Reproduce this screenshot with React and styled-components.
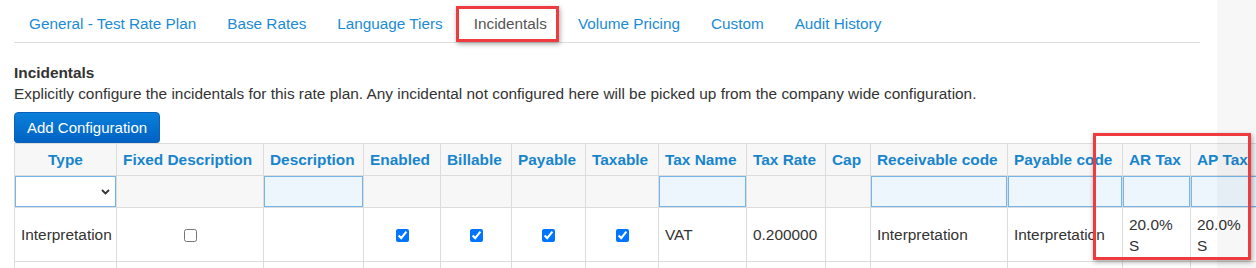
import React from "react";
import styled, { createGlobalStyle, css } from "styled-components";

const GlobalStyle = createGlobalStyle`
  html, body { margin: 0; padding: 0; overflow: hidden; background: #fff; }
  body {
    font-family: "Liberation Sans", Arial, Helvetica, sans-serif;
    font-size: 15.4px;
    line-height: 21px;
    color: #333;
  }
  * { box-sizing: border-box; }
`;

const Page = styled.div`
  position: relative;
  width: 1256px;
  height: 268px;
  overflow: hidden;
`;

const Content = styled.div`
  width: 1200px;
  padding-left: 14px;
`;

const TabBar = styled.nav`
  display: flex;
  gap: 1px;
  height: 43px;
  border-bottom: 1px solid #dedede;
`;

const Tab = styled.a`
  position: relative;
  display: block;
  padding: 13px 15px 0;
  height: 42px;
  font-size: 15.3px;
  line-height: 21px;
  color: #1b8bd6;
  text-decoration: none;
  white-space: nowrap;
  ${(p) =>
    p.$active &&
    css`
      color: #555;
      &::after {
        content: "";
        position: absolute;
        left: -3px;
        right: 3px;
        top: 6px;
        bottom: 0;
        border: 3px solid #ee3b3f;
        box-shadow: 1px 2px 5px rgba(0, 0, 0, 0.35);
      }
    `}
`;

const Section = styled.section`
  padding-top: 19px;
`;

const Title = styled.h4`
  margin: 0;
  font-size: 15.4px;
  line-height: 21px;
  font-weight: bold;
  color: #333;
`;

const Lead = styled.p`
  margin: 0;
  font-size: 15.4px;
  line-height: 21px;
  color: #333;
  white-space: nowrap;
`;

const PrimaryButton = styled.button`
  display: block;
  margin-top: 8px;
  height: 31px;
  padding: 0 12px;
  border: 1px solid #0a5fb8;
  border-radius: 4px 4px 3px 3px;
  background: linear-gradient(#0b80da, #0062c4);
  color: #fff;
  font-family: inherit;
  font-size: 15px;
  line-height: 29px;
  cursor: pointer;
`;

const Grid = styled.table`
  table-layout: fixed;
  width: 1244px;
  border-collapse: collapse;
  font-size: 15.4px;
`;

const HeadCell = styled.th`
  height: 32px;
  padding: 0 6px;
  border: 1px solid #dcdcdc;
  background: #f7f7f7;
  color: #1785cc;
  font-weight: bold;
  text-align: ${(p) => (p.$center ? "center" : "left")};
  white-space: nowrap;
  overflow: hidden;
  vertical-align: middle;
`;

const FilterCell = styled.td`
  height: 32px;
  padding: 0;
  border: 1px solid #dcdcdc;
  background: #f7f7f7;
`;

const FilterInput = styled.input`
  display: block;
  width: 100%;
  height: 31px;
  margin: 0;
  border: 1px solid #75b5e9;
  background: #edf5fd;
  outline: none;
`;

const SelectWrap = styled.div`
  position: relative;
  height: 31px;
`;

const FilterSelect = styled.select`
  display: block;
  width: 100%;
  height: 31px;
  margin: 0;
  border: 1px solid #75b5e9;
  background: #fff;
  appearance: none;
  -webkit-appearance: none;
  border-radius: 0;
  outline: none;
`;

const Chevron = styled.svg`
  position: absolute;
  right: 6px;
  top: 13px;
  pointer-events: none;
`;

const Cell = styled.td`
  height: ${(p) => p.$h || 54}px;
  padding: 0 6px;
  border: 1px solid #dcdcdc;
  background: #fff;
  color: #333;
  vertical-align: middle;
  text-align: ${(p) => (p.$center ? "center" : "left")};
  white-space: nowrap;
  overflow: visible;
`;

const Check = styled.input.attrs({ type: "checkbox" })`
  display: inline-block;
  width: 13px;
  height: 13px;
  margin: 0;
  vertical-align: middle;
`;

const SideBand = styled.div`
  position: absolute;
  top: 0;
  right: 0;
  width: 39px;
  height: 100%;
  background: rgba(0, 0, 0, 0.03);
  pointer-events: none;
`;

const Callout = styled.div`
  position: absolute;
  left: ${(p) => p.$x}px;
  top: ${(p) => p.$y}px;
  width: ${(p) => p.$w}px;
  height: ${(p) => p.$h}px;
  border: 3px solid #ee3b3f;
  box-shadow: 1px 2px 5px rgba(0, 0, 0, 0.35);
  pointer-events: none;
`;

const tabs = [
  "General - Test Rate Plan",
  "Base Rates",
  "Language Tiers",
  "Incidentals",
  "Volume Pricing",
  "Custom",
  "Audit History",
];

const columns = [
  { label: "Type", width: 102, center: true, filter: "select" },
  { label: "Fixed Description", width: 147 },
  { label: "Description", width: 100, filter: "input" },
  { label: "Enabled", width: 77 },
  { label: "Billable", width: 71 },
  { label: "Payable", width: 74 },
  { label: "Taxable", width: 73 },
  { label: "Tax Name", width: 88, filter: "input" },
  { label: "Tax Rate", width: 79 },
  { label: "Cap", width: 45 },
  { label: "Receivable code", width: 137, filter: "input" },
  { label: "Payable code", width: 115, filter: "input" },
  { label: "AR Tax", width: 68, filter: "input" },
  { label: "AP Tax", width: 68, filter: "input" },
];

const row = [
  { text: "Interpretation" },
  { check: false },
  { text: "" },
  { check: true },
  { check: true },
  { check: true },
  { check: true },
  { text: "VAT" },
  { text: "0.200000" },
  { text: "" },
  { text: "Interpretation" },
  { text: "Interpretation" },
  { lines: ["20.0%", "S"] },
  { lines: ["20.0%", "S"] },
];

function renderFilter(col, i) {
  if (col.filter === "select") {
    return (
      <FilterCell key={i}>
        <SelectWrap>
          <FilterSelect defaultValue="">
            <option value=""></option>
            <option value="interpretation">Interpretation</option>
          </FilterSelect>
          <Chevron width="9" height="6" viewBox="0 0 9 6">
            <path d="M1 1l3.5 3.5L8 1" fill="none" stroke="#333" strokeWidth="1.8" />
          </Chevron>
        </SelectWrap>
      </FilterCell>
    );
  }
  if (col.filter === "input") {
    return (
      <FilterCell key={i}>
        <FilterInput type="text" />
      </FilterCell>
    );
  }
  return <FilterCell key={i} />;
}

function renderCell(c, i) {
  if (c.check !== undefined) {
    return (
      <Cell key={i} $center>
        <Check defaultChecked={c.check} />
      </Cell>
    );
  }
  if (c.lines) {
    return (
      <Cell key={i}>
        {c.lines.map((l, j) => (
          <React.Fragment key={j}>
            {j > 0 && <br />}
            {l}
          </React.Fragment>
        ))}
      </Cell>
    );
  }
  return <Cell key={i}>{c.text}</Cell>;
}

export default function App() {
  return (
    <Page>
      <GlobalStyle />
      <Content>
        <TabBar>
          {tabs.map((t) => (
            <Tab key={t} href="#" $active={t === "Incidentals"}>
              {t}
            </Tab>
          ))}
        </TabBar>
        <Section>
          <Title>Incidentals</Title>
          <Lead>
            Explicitly configure the incidentals for this rate plan. Any incidental not configured
            here will be picked up from the company wide configuration.
          </Lead>
          <PrimaryButton type="button">Add Configuration</PrimaryButton>
          <Grid>
            <colgroup>
              {columns.map((c, i) => (
                <col key={i} style={{ width: c.width }} />
              ))}
            </colgroup>
            <thead>
              <tr>
                {columns.map((c, i) => (
                  <HeadCell key={i} $center={c.center}>
                    {c.label}
                  </HeadCell>
                ))}
              </tr>
              <tr>{columns.map(renderFilter)}</tr>
            </thead>
            <tbody>
              <tr>{row.map(renderCell)}</tr>
              <tr>
                {columns.map((c, i) => (
                  <Cell key={i} $h={40} />
                ))}
              </tr>
            </tbody>
          </Grid>
        </Section>
      </Content>
      <SideBand />
      <Callout $x={1093} $y={133} $w={158} $h={127} />
    </Page>
  );
}
